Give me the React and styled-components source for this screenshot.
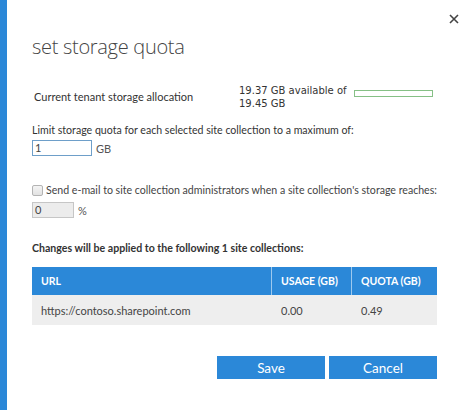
import React from "react";
import styled, { createGlobalStyle } from "styled-components";

const GlobalStyle = createGlobalStyle`
  html, body {
    margin: 0;
    padding: 0;
    background: #fff;
  }
  body {
    font-family: Lato, "Open Sans", sans-serif;
    color: #333;
  }
`;

const Dialog = styled.div`
  width: 474px;
  height: 410px;
  box-sizing: border-box;
  border-left: 7px solid #2b88d8;
  background: #fff;
  position: relative;
  padding: 34px 37px 0 25px;
`;

const CloseBtn = styled.div`
  position: absolute;
  top: 13px;
  right: 14px;
  width: 12px;
  height: 12px;
  display: flex;
  align-items: center;
  justify-content: center;
`;

const Title = styled.h1`
  margin: 0 0 24px 0;
  font-family: "Open Sans", Lato, sans-serif;
  font-size: 20px;
  font-weight: 300;
  color: #444;
  letter-spacing: -0.3px;
  line-height: 26px;
`;

const AllocRow = styled.div`
  display: flex;
  align-items: flex-start;
  margin-bottom: 13px;
`;

const AllocLabel = styled.div`
  width: 205px;
  padding-left: 2px;
  padding-top: 6px;
  font-size: 11px;
  color: #333;
`;

const AllocValue = styled.div`
  font-family: "DejaVu Sans", Verdana, sans-serif;
  font-size: 10px;
  line-height: 13px;
  color: #333;
  width: 115px;
`;

const Meter = styled.div`
  width: 77px;
  height: 5px;
  margin-top: 6px;
  border: 1px solid #86c086;
  background: #fff;
`;

const Label = styled.div`
  font-size: 10.6px;
  line-height: 14px;
  color: #333;
`;

const FieldRow = styled.div`
  display: flex;
  align-items: center;
  gap: 4px;
  margin-top: ${(p) => p.$top || 0}px;
`;

const Input = styled.div`
  width: ${(p) => p.$w}px;
  height: 14px;
  box-sizing: content-box;
  border: 1px solid ${(p) => (p.$disabled ? "#c6c6c6" : "#6e9fc9")};
  background: ${(p) => (p.$disabled ? "#ececec" : "#fff")};
  font-size: 11px;
  line-height: 14px;
  padding-left: 2px;
  color: #444;
`;

const Unit = styled.span`
  font-size: 11px;
  color: #555;
`;

const CheckRow = styled.label`
  display: flex;
  align-items: center;
  gap: 3px;
  margin-top: 27px;
  font-size: 10.6px;
  line-height: 14px;
  color: #444;
  white-space: nowrap;
`;

const Box = styled.span`
  flex-shrink: 0;
  width: 9px;
  height: 9px;
  border: 1px solid #b4b4b4;
  border-radius: 2px;
  background: linear-gradient(#f4f4f4, #e2e2e2);
`;

const Changes = styled.div`
  margin-top: 24px;
  font-size: 10.6px;
  font-weight: 700;
  color: #333;
`;

const Table = styled.div`
  margin-top: 13px;
  width: 405px;
  display: grid;
  grid-template-columns: 239px 80px 86px;
`;

const Th = styled.div`
  background: #2b88d8;
  color: #fff;
  font-size: 10.5px;
  font-weight: 700;
  height: 28px;
  display: flex;
  align-items: center;
  padding-left: 9px;
  border-left: ${(p) => (p.$first ? "none" : "1px solid #9ec9ee")};
`;

const Td = styled.div`
  background: #eeeeee;
  color: #444;
  font-size: 11px;
  height: 30px;
  display: flex;
  align-items: center;
  padding-left: 9px;
  border-left: ${(p) => (p.$first ? "none" : "1px solid #eeeeee")};
`;

const Actions = styled.div`
  margin-top: 31px;
  width: 405px;
  display: flex;
  justify-content: flex-end;
  gap: 4px;
`;

const Button = styled.button`
  width: 108px;
  height: 23px;
  border: none;
  background: #2b88d8;
  color: #fff;
  font-family: Lato, "Open Sans", sans-serif;
  font-size: 13.5px;
  padding: 0;
`;

export default function App() {
  return (
    <>
      <GlobalStyle />
      <Dialog>
        <CloseBtn>
          <svg width="10" height="10" viewBox="0 0 10 10">
            <path d="M1 1L9 9M9 1L1 9" stroke="#444" strokeWidth="1.6" />
          </svg>
        </CloseBtn>
        <Title>set storage quota</Title>
        <AllocRow>
          <AllocLabel>Current tenant storage allocation</AllocLabel>
          <AllocValue>
            19.37 GB available of
            <br />
            19.45 GB
          </AllocValue>
          <Meter />
        </AllocRow>
        <Label>Limit storage quota for each selected site collection to a maximum of:</Label>
        <FieldRow $top={3}>
          <Input $w={56}>1</Input>
          <Unit>GB</Unit>
        </FieldRow>
        <CheckRow>
          <Box />
          Send e-mail to site collection administrators when a site collection's storage reaches:
        </CheckRow>
        <FieldRow $top={5}>
          <Input $w={38} $disabled>
            0
          </Input>
          <Unit>%</Unit>
        </FieldRow>
        <Changes>Changes will be applied to the following 1 site collections:</Changes>
        <Table>
          <Th $first>URL</Th>
          <Th>USAGE (GB)</Th>
          <Th>QUOTA (GB)</Th>
          <Td $first>https://contoso.sharepoint.com</Td>
          <Td>0.00</Td>
          <Td>0.49</Td>
        </Table>
        <Actions>
          <Button>Save</Button>
          <Button>Cancel</Button>
        </Actions>
      </Dialog>
    </>
  );
}
